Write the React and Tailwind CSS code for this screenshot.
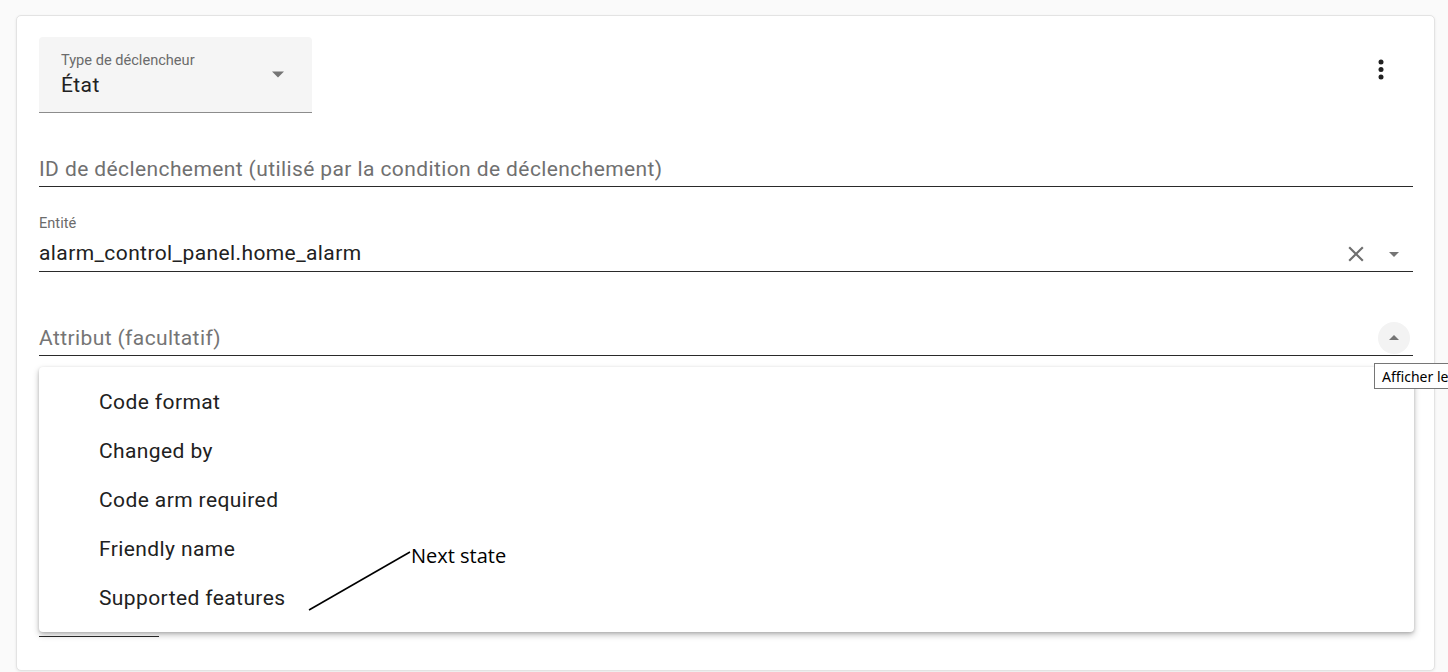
import React from "react";

const roboto = { fontFamily: "Roboto, 'Noto Sans', sans-serif" };

function Caret({ up = false, className = "" }) {
  return (
    <svg width="24" height="24" viewBox="0 0 24 24" className={className}>
      <path d={up ? "M7 14l5-5 5 5z" : "M7 10l5 5 5-5z"} fill="#757575" />
    </svg>
  );
}

export default function App() {
  return (
    <div className="relative w-[1448px] h-[672px] overflow-hidden bg-[#fafafa]" style={roboto}>
      <div className="absolute left-[16px] top-[15px] w-[1419px] h-[656px] bg-white rounded-[5px] border border-[#e3e3e3] shadow-[0_1px_3px_rgba(0,0,0,0.08)]">
        <div className="pl-[22px] pr-[21px] pt-[21px] flex flex-col">
          {/* top row */}
          <div className="flex items-start justify-between">
            <div className="w-[273px] h-[76px] bg-[#f5f5f5] rounded-t-[4px] border-b border-[#8c8c8c] relative pl-[22px] pr-[20px] flex items-center">
              <div className="flex flex-col mt-[4px]">
                <span className="text-[14.6px] leading-[16px] text-[#6b6b6b] mt-[-4px]">Type de déclencheur</span>
                <span className="text-[21px] leading-[26px] tracking-[0.4px] text-[#212121] mt-[4px]">État</span>
              </div>
              <Caret className="absolute right-[22px] top-[25px] scale-[1.2]" />
            </div>
            <div className="mt-[20px] mr-[20px] w-[24px] h-[24px] flex items-center justify-center">
              <svg width="24" height="24" viewBox="0 0 24 24">
                <circle cx="12" cy="5" r="2.5" fill="#212121" />
                <circle cx="12" cy="12.5" r="2.5" fill="#212121" />
                <circle cx="12" cy="20" r="2.5" fill="#212121" />
              </svg>
            </div>
          </div>

          {/* ID field */}
          <div className="mt-[37px] h-[37px] border-b border-[#2a2a2a] flex items-start">
            <span className="text-[21px] leading-[30px] tracking-[0.4px] text-[#707070] mt-[4px]">ID de déclenchement (utilisé par la condition de déclenchement)</span>
          </div>

          {/* Entity */}
          <div className="mt-[27px] h-[58px] border-b border-[#2a2a2a] relative flex flex-col">
            <span className="text-[14.6px] leading-[16px] text-[#6b6b6b] mt-[1px]">Entité</span>
            <span className="text-[21px] leading-[26px] tracking-[0.4px] text-[#212121] mt-[9px]">alarm_control_panel.home_alarm</span>
            <svg width="26" height="26" viewBox="0 0 24 24" className="absolute right-[44px] top-[27px]">
              <path d="M19 6.41L17.59 5 12 10.59 6.41 5 5 6.41 10.59 12 5 17.59 6.41 19 12 13.41 17.59 19 19 17.59 13.41 12z" fill="#6f6f6f" />
            </svg>
            <Caret className="absolute right-[7px] top-[28px]" />
          </div>

          {/* Attribut */}
          <div className="mt-[48px] h-[36px] border-b border-[#2a2a2a] relative flex items-start">
            <span className="text-[21px] leading-[30px] tracking-[0.4px] text-[#757575] mt-[3px]">Attribut (facultatif)</span>
            <div className="absolute right-[3px] top-[2px] w-[32px] h-[32px] rounded-full bg-[#f3f3f3] flex items-center justify-center">
              <Caret up />
            </div>
          </div>

          {/* partially hidden next field underline */}
          <div className="mt-[280px] w-[120px] border-b border-[#2a2a2a]" />
        </div>
      </div>

      {/* dropdown menu */}
      <div className="absolute left-[39px] top-[367px] w-[1375px] h-[265px] bg-white rounded-[4px] shadow-[0_3px_6px_rgba(0,0,0,0.25),0_1px_3px_rgba(0,0,0,0.15)] pt-[11px] pb-[9px] flex flex-col">
        {["Code format", "Changed by", "Code arm required", "Friendly name", "Supported features"].map((t) => (
          <div key={t} className="h-[49px] flex items-center pl-[60px] text-[21px] tracking-[0.4px] text-[#212121]">
            {t}
          </div>
        ))}
      </div>

      {/* tooltip */}
      <div
        className="absolute left-[1374px] top-[363px] h-[26px] border border-[#767676] bg-white px-[7px] flex items-center text-[14px] text-black whitespace-nowrap"
        style={{ fontFamily: "'Noto Sans', 'Liberation Sans', sans-serif" }}
      >
        Afficher les options
      </div>

      {/* annotation */}
      <svg className="absolute left-0 top-0" width="1448" height="672">
        <line x1="309" y1="610" x2="410" y2="552" stroke="#000" strokeWidth="1.6" />
      </svg>
      <div
        className="absolute left-[411px] top-[543px] text-[20px] leading-[26px] text-black"
        style={{ fontFamily: "'Open Sans', 'Liberation Sans', sans-serif" }}
      >
        Next state
      </div>
    </div>
  );
}
